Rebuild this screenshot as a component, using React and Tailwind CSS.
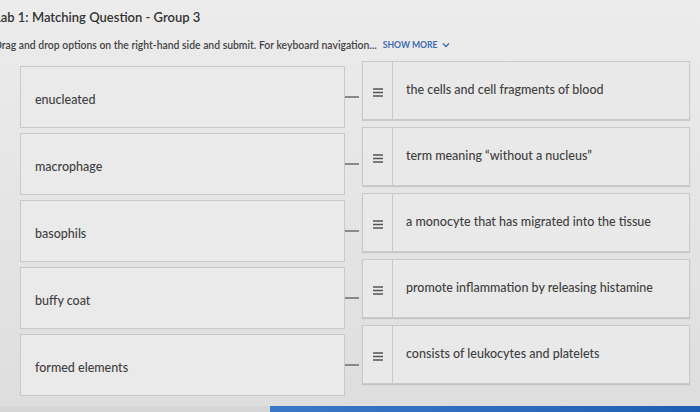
import React from 'react';

const leftItems = ['enucleated', 'macrophage', 'basophils', 'buffy coat', 'formed elements'];
const rightItems = [
  'the cells and cell fragments of blood',
  'term meaning \u201Cwithout a nucleus\u201D',
  'a monocyte that has migrated into the tissue',
  'promote inflammation by releasing histamine',
  'consists of leukocytes and platelets',
];

const Handle = () => (
  <svg width="10" height="9" viewBox="0 0 10 9" className="text-[#555]">
    <path d="M0 1h10M0 4.5h10M0 8h10" stroke="currentColor" strokeWidth="1.3" />
  </svg>
);

const App = () => {
  return (
    <div
      className="w-[700px] h-[412px] overflow-hidden flex flex-col bg-gradient-to-b from-[#ececec] to-[#dedede] text-[#3d3d3d]"
      style={{ fontFamily: 'Lato, "Open Sans", sans-serif' }}
    >
      <div className="pt-[8px] ml-[-6px]">
        <h1 className="text-[13px] leading-[18px] font-semibold text-[#333] whitespace-nowrap">
          Lab 1: Matching Question - Group 3
        </h1>
        <p className="mt-[12px] text-[10.4px] leading-[14px] font-semibold text-[#444] whitespace-nowrap flex items-center">
          Drag and drop options on the right-hand side and submit. For keyboard navigation...
          <span className="ml-[6px] text-[#3e6ab0] font-bold text-[8.6px] flex items-center gap-[4px]">
            SHOW MORE
            <svg width="8" height="6" viewBox="0 0 8 6">
              <path d="M1 1.5l3 3 3-3" stroke="#3e6ab0" strokeWidth="1.4" fill="none" />
            </svg>
          </span>
        </p>
      </div>

      <div className="flex-1 flex">
        <div className="w-[362px] pl-[20px] pt-[14px] flex flex-col gap-[5px]">
          {leftItems.map((item) => (
            <div key={item} className="h-[62px] flex items-center">
              <div className="flex-1 h-full border border-[#c9c9c9] bg-[#eaeaea] flex items-center pl-[14px] pt-[6px] text-[12.5px] font-medium text-[#3f3f3f]">
                {item}
              </div>
              <div className="w-[14px] h-[2px] bg-[#8a8a8a] mr-[3px]" />
            </div>
          ))}
        </div>

        <div className="w-[328px] pt-[9px] flex flex-col gap-[7px]">
          {rightItems.map((item) => (
            <div key={item} className="h-[59px] flex border border-[#c9c9c9] bg-[#e9e9e9] shadow-[0_1px_1px_rgba(0,0,0,0.12)]">
              <div className="w-[30px] border-r border-[#c9c9c9] flex items-center justify-center pt-[4px]">
                <Handle />
              </div>
              <div className="flex-1 flex items-center pl-[13px] text-[12.5px] text-[#3f3f3f] font-medium">
                {item}
              </div>
            </div>
          ))}
        </div>
      </div>

      <div className="h-[6px] flex">
        <div className="w-[270px] bg-[#d6d6d6]" />
        <div className="flex-1 bg-gradient-to-r from-[#3a78c9] to-[#1f5fb3]" />
      </div>
    </div>
  );
};

export default App;
